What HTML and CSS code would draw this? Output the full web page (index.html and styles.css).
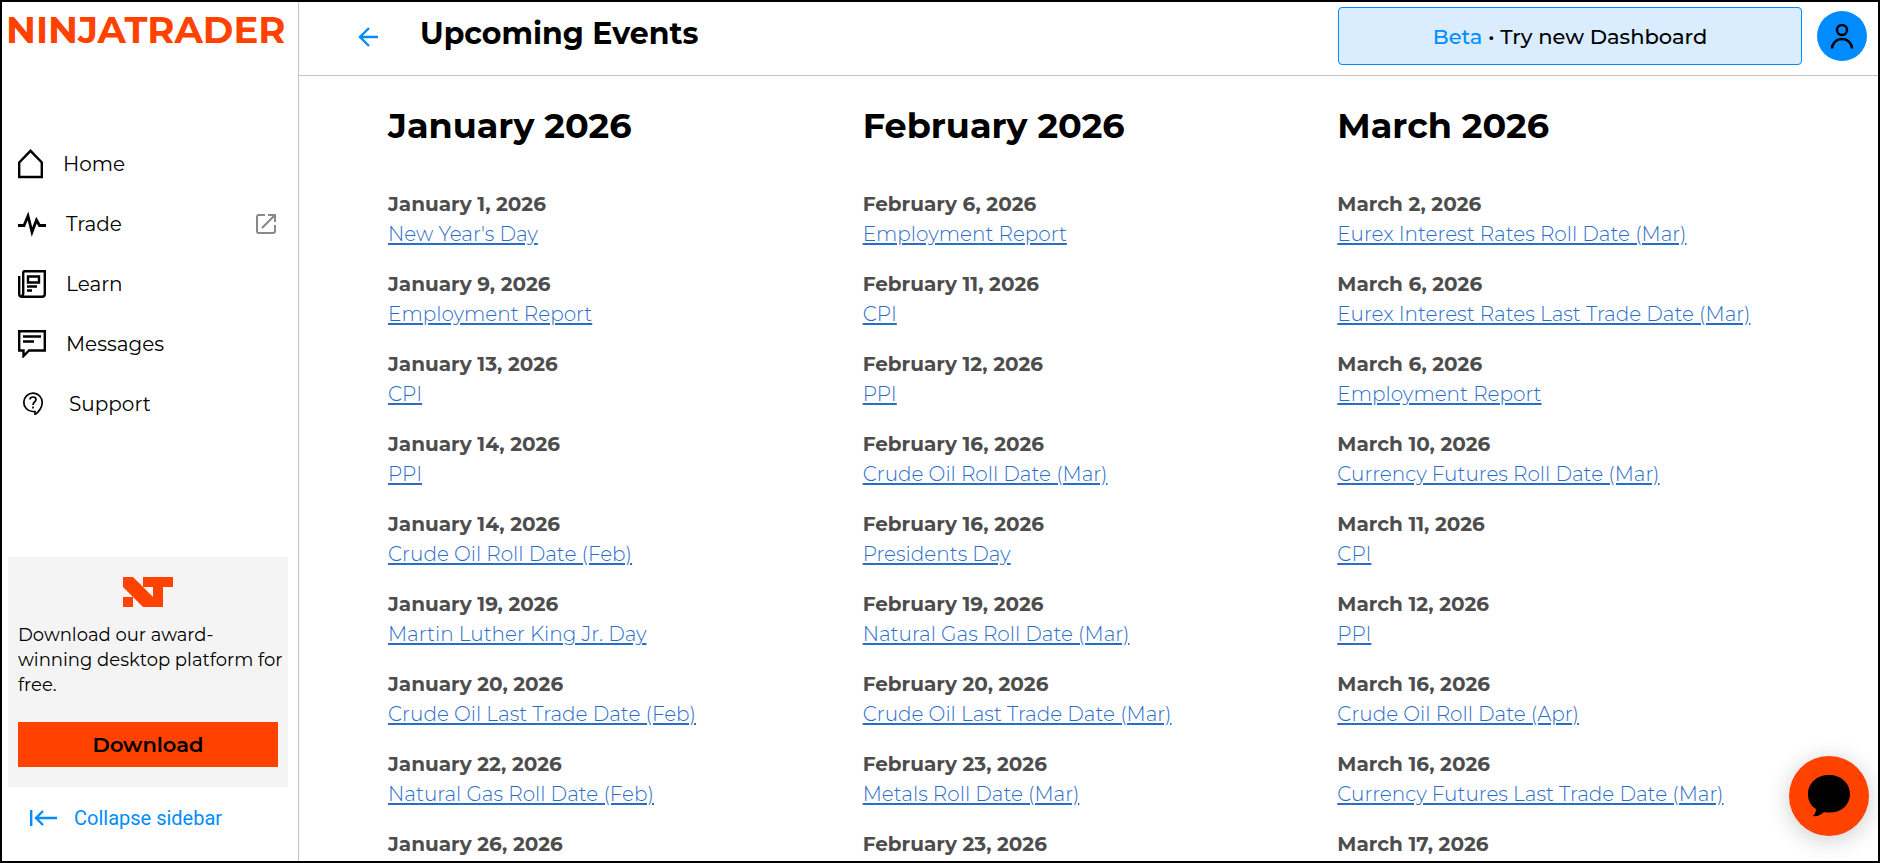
FILE: index.html
```
<!DOCTYPE html>
<html lang="en">
<head>
    <meta charset="UTF-8">
    <meta name="viewport" content="width=device-width, initial-scale=1.0">
    <title>Upcoming Events</title>
    <link rel="stylesheet" href="styles.css">
</head>
<body>
    <aside class="sidebar">
        <a class="brand" href="#">NINJATRADER</a>
        <nav class="nav">
            <a class="nav-item" href="#">
                <svg width="25" height="30" viewBox="0 0 25 30" fill="none" stroke="#000" stroke-width="2.400"><path d="M1.200 13.500 12.500 1.800 23.800 13.500V28H1.200z"/></svg>
                <span>Home</span>
            </a>
            <a class="nav-item" href="#">
                <svg width="28" height="26" viewBox="0 0 28 26" fill="none" stroke="#000" stroke-width="2.800" stroke-miterlimit="6"><path d="M0 14.500H6L10 5 14 21 18.500 9 21.500 14.500H28"/></svg>
                <span>Trade</span>
                <svg class="external" width="20" height="20" viewBox="0 0 20 20" fill="none" stroke="#888" stroke-width="2"><path d="M9 1H3Q1 1 1 3V17Q1 19 3 19H17Q19 19 19 17V11M12 1H19V8M19 1 6 14"/></svg>
            </a>
            <a class="nav-item" href="#">
                <svg width="28" height="28" viewBox="0 0 28 28" fill="none" stroke="#000" stroke-width="2.400"><path d="M5.200 1.200H26.800V24Q26.800 26.800 24 26.800H4Q1.200 26.800 1.200 24V6M5.200 1.200V23Q5.200 26 3 26.800"/><path d="M10 6.500H21V12.500H10z"/><path d="M9 16.500H19M9 20.500H14"/></svg>
                <span>Learn</span>
            </a>
            <a class="nav-item" href="#">
                <svg width="28" height="28" viewBox="0 0 28 28" fill="none" stroke="#000" stroke-width="2.400"><path d="M1.200 1.200H26.800V20.500H11L5.500 26V20.500H1.200z"/><path d="M5 6.500H23M5 11.500H16"/></svg>
                <span>Messages</span>
            </a>
            <a class="nav-item" href="#">
                <svg width="31" height="26" viewBox="0 0 31 26" fill="none" stroke="#000" stroke-width="1.700"><path d="M17 24V20.500H14.500A9.200 9.200 0 1 1 24.200 11.500C24.200 16 21 21 17 23.500"/><path d="M12 8.500Q12 6 15 6T18 8.500C18 11 15 11 15 14M15 15.500V17.500"/></svg>
                <span>Support</span>
            </a>
        </nav>
        <section class="promo">
            <svg class="promo-logo" width="50" height="30" viewBox="0 0 50 30" fill="#ff4200"><path d="M0 0H10L30 20V10H20V0H50V10H40V30H20L0 10zM0 20H10V30H0z"/></svg>
            <p>Download our award-winning desktop platform for free.</p>
            <button class="download" type="button">Download</button>
        </section>
        <button class="collapse" type="button">
            <svg width="27" height="16" viewBox="0 0 27 16" fill="none" stroke="#008cff" stroke-width="2.400"><path d="M1.200 0V16M27 8H6M13 1 6 8 13 15"/></svg>
            <span>Collapse sidebar</span>
        </button>
    </aside>

    <div class="page">
        <header class="topbar">
            <a class="back" href="#" aria-label="Back">
                <svg width="20" height="22" viewBox="0 0 20 22" fill="none" stroke="#008cff" stroke-width="2.400"><path d="M20 12H2M11 3 2 12 11 21"/></svg>
            </a>
            <h1>Upcoming Events</h1>
            <button class="beta" type="button"><span>Beta</span> • Try new Dashboard</button>
            <button class="avatar" type="button" aria-label="Account">
                <svg width="24" height="28" viewBox="0 0 24 28" fill="none" stroke="#000" stroke-width="2.500"><circle cx="12" cy="8" r="5"/><path d="M2 26.500A10 9.500 0 0 1 22 26.500"/></svg>
            </button>
        </header>
        <main class="months">
            <section>
                <h2>January 2026</h2>
                <ul class="events">
                    <li><time>January 1, 2026</time><a href="#">New Year's Day</a></li>
                    <li><time>January 9, 2026</time><a href="#">Employment Report</a></li>
                    <li><time>January 13, 2026</time><a href="#">CPI</a></li>
                    <li><time>January 14, 2026</time><a href="#">PPI</a></li>
                    <li><time>January 14, 2026</time><a href="#">Crude Oil Roll Date (Feb)</a></li>
                    <li><time>January 19, 2026</time><a href="#">Martin Luther King Jr. Day</a></li>
                    <li><time>January 20, 2026</time><a href="#">Crude Oil Last Trade Date (Feb)</a></li>
                    <li><time>January 22, 2026</time><a href="#">Natural Gas Roll Date (Feb)</a></li>
                    <li><time>January 26, 2026</time></li>
                </ul>
            </section>
            <section>
                <h2>February 2026</h2>
                <ul class="events">
                    <li><time>February 6, 2026</time><a href="#">Employment Report</a></li>
                    <li><time>February 11, 2026</time><a href="#">CPI</a></li>
                    <li><time>February 12, 2026</time><a href="#">PPI</a></li>
                    <li><time>February 16, 2026</time><a href="#">Crude Oil Roll Date (Mar)</a></li>
                    <li><time>February 16, 2026</time><a href="#">Presidents Day</a></li>
                    <li><time>February 19, 2026</time><a href="#">Natural Gas Roll Date (Mar)</a></li>
                    <li><time>February 20, 2026</time><a href="#">Crude Oil Last Trade Date (Mar)</a></li>
                    <li><time>February 23, 2026</time><a href="#">Metals Roll Date (Mar)</a></li>
                    <li><time>February 23, 2026</time></li>
                </ul>
            </section>
            <section>
                <h2>March 2026</h2>
                <ul class="events">
                    <li><time>March 2, 2026</time><a href="#">Eurex Interest Rates Roll Date (Mar)</a></li>
                    <li><time>March 6, 2026</time><a href="#">Eurex Interest Rates Last Trade Date (Mar)</a></li>
                    <li><time>March 6, 2026</time><a href="#">Employment Report</a></li>
                    <li><time>March 10, 2026</time><a href="#">Currency Futures Roll Date (Mar)</a></li>
                    <li><time>March 11, 2026</time><a href="#">CPI</a></li>
                    <li><time>March 12, 2026</time><a href="#">PPI</a></li>
                    <li><time>March 16, 2026</time><a href="#">Crude Oil Roll Date (Apr)</a></li>
                    <li><time>March 16, 2026</time><a href="#">Currency Futures Last Trade Date (Mar)</a></li>
                    <li><time>March 17, 2026</time></li>
                </ul>
            </section>
        </main>
    </div>

    <button class="chat" type="button" aria-label="Chat">
        <svg width="42" height="42" viewBox="0 0 42 42"><path d="M21 0C9 0 0 8 0 19C0 26 3 31 8 34C8 37 7 39 5 41Q11 42 16 37C31 40 42 31 42 19C42 8 33 0 21 0z"/></svg>
    </button>
</body>
</html>
```
FILE: styles.css
```
* {
    box-sizing: border-box;
}
body {
    margin: 0;
    height: 100vh;
    display: flex;
    overflow: hidden;
    border: 2px solid #000;
    background: #fff;
    color: #000;
    font-family: Montserrat, Inter, sans-serif;
    font-size: 20px;
}
button {
    padding: 0;
    border: 0;
    background: none;
    color: inherit;
    font: inherit;
    cursor: pointer;
}
svg {
    display: block;
    flex-shrink: 0;
}

/* sidebar */
.sidebar {
    width: 297px;
    flex-shrink: 0;
    display: flex;
    flex-direction: column;
    border-right: 1px solid #c4c4c4;
}
.brand {
    padding: 4px 0 0 4px;
    color: #ff4200;
    font-size: 37px;
    font-weight: 700;
    line-height: 48px;
    text-decoration: none;
}
.nav {
    padding-top: 80px;
}
.nav-item {
    display: flex;
    align-items: center;
    gap: 20px;
    height: 60px;
    padding: 0 22px 0 16px;
    color: #000;
    text-decoration: none;
}
.external {
    margin-left: auto;
}
.promo {
    margin: auto 10px 0 6px;
    padding: 20px 10px;
    background: #f4f4f4;
}
.promo-logo {
    margin: 0 auto;
}
.promo p {
    margin: 16px -6px 24px 0;
    font-size: 18px;
    line-height: 25px;
}
.download {
    display: block;
    width: 100%;
    height: 45px;
    background: #ff4200;
    font-size: 21px;
    font-weight: 600;
}
.collapse {
    display: flex;
    align-items: center;
    gap: 17px;
    height: 74px;
    padding: 0 0 12px 28px;
    color: #008cff;
    font-family: Roboto, sans-serif;
}

/* header and event list */
.page {
    flex: 1;
    min-width: 0;
    display: flex;
    flex-direction: column;
}
.topbar {
    display: flex;
    align-items: center;
    height: 74px;
    flex-shrink: 0;
    padding: 0 11px 5px 59px;
    border-bottom: 1px solid #c4c4c4;
}
h1 {
    flex: 1;
    margin: 0 0 5px 42px;
    font-size: 30px;
    font-weight: 700;
}
.beta {
    width: 464px;
    height: 58px;
    border: 1px solid #008cff;
    border-radius: 4px;
    background: #d9edff;
    font-size: 21px;
    font-weight: 500;
}
.beta span {
    color: #008cff;
}
.avatar {
    display: flex;
    align-items: center;
    justify-content: center;
    width: 50px;
    height: 50px;
    margin-left: 15px;
    border-radius: 50%;
    background: #008cff;
}
.months {
    flex: 1;
    min-height: 0;
    display: grid;
    grid-template-columns: repeat(3, 1fr);
    padding: 30px 66px 0 89px;
    overflow: hidden;
}
h2 {
    margin: 0 0 43px;
    font-size: 35px;
    font-weight: 700;
    line-height: 40px;
}
.events {
    margin: 0;
    padding: 0;
    list-style: none;
    line-height: 30px;
}
.events li {
    margin-bottom: 20px;
}
.events time {
    display: block;
    color: #4d4d4d;
    font-weight: 700;
}
.events a {
    color: #2a6dc9;
    font-weight: 300;
    text-decoration-thickness: 2px;
    text-underline-offset: 2px;
}

/* floats over the page */
.chat {
    position: fixed;
    right: 11px;
    bottom: 27px;
    display: flex;
    align-items: center;
    justify-content: center;
    width: 80px;
    height: 80px;
    border-radius: 50%;
    background: #ff4200;
    box-shadow: 0 4px 24px rgba(0, 0, 0, 0.2);
}
```
